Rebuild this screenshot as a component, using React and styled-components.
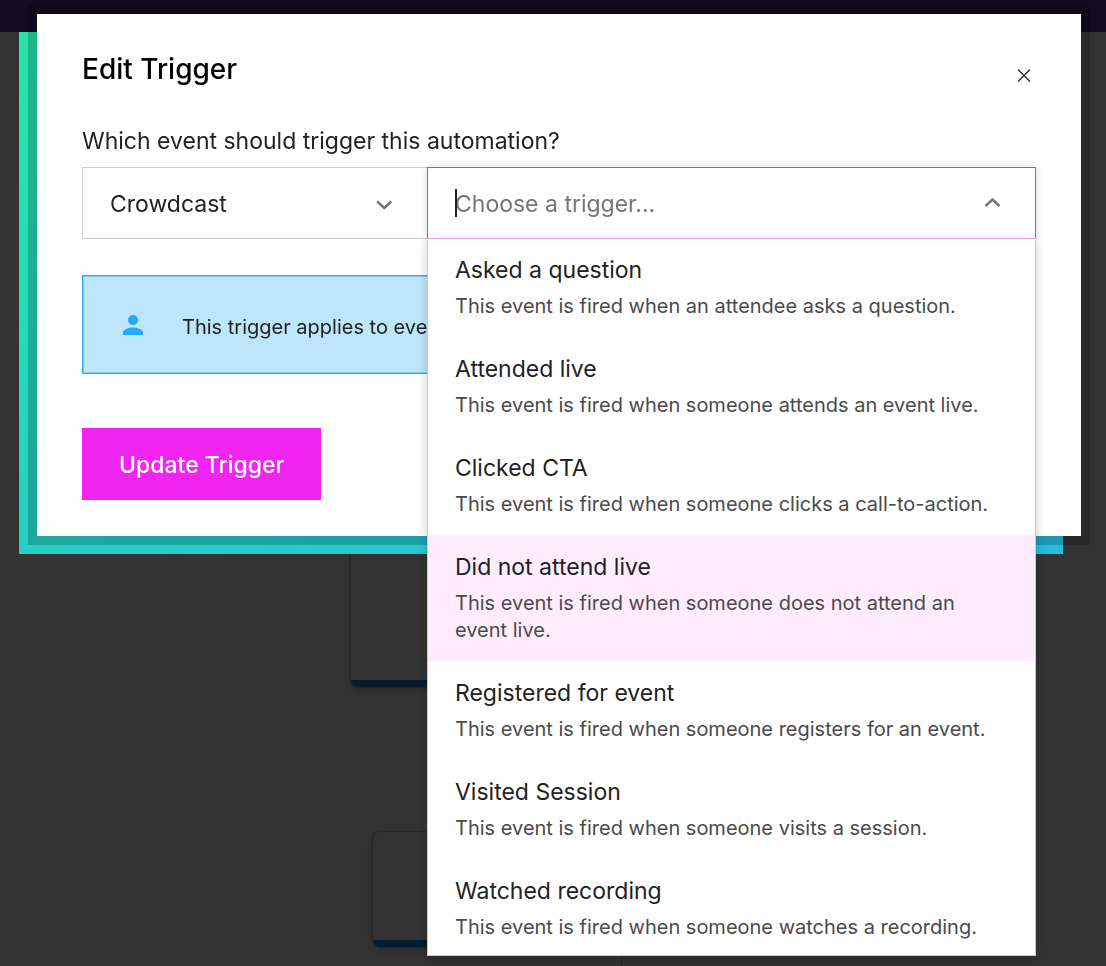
import React from 'react'
import styled, { createGlobalStyle } from 'styled-components'
import { MdPerson } from 'react-icons/md'

const triggers = [
  {
    id: 'asked',
    title: 'Asked a question',
    text: 'This event is fired when an attendee asks a question.',
  },
  {
    id: 'attended',
    title: 'Attended live',
    text: 'This event is fired when someone attends an event live.',
  },
  {
    id: 'clicked',
    title: 'Clicked CTA',
    text: 'This event is fired when someone clicks a call-to-action.',
  },
  {
    id: 'missed',
    title: 'Did not attend live',
    text: 'This event is fired when someone does not attend an event live.',
  },
  {
    id: 'registered',
    title: 'Registered for event',
    text: 'This event is fired when someone registers for an event.',
  },
  {
    id: 'visited',
    title: 'Visited Session',
    text: 'This event is fired when someone visits a session.',
  },
  {
    id: 'watched',
    title: 'Watched recording',
    text: 'This event is fired when someone watches a recording.',
  },
]

const Chevron = ({ up }) => (
  <ChevronIcon viewBox='0 0 18 16' aria-hidden='true'>
    <path d={up ? 'M2.5 11 9.5 4.5l7 6.5' : 'M2.2 6.5 9.2 13l7-6.5'} />
  </ChevronIcon>
)

const App = () => {
  const [active, setActive] = React.useState('missed')
  const [query, setQuery] = React.useState('')

  return (
    <>
      <GlobalStyle />
      <Page>
        <TopBar />
        <Canvas>
          <Step $width={540} $height={504} />
          <Connector $height={145} />
          <Step $width={496} $height={115} />
          <Connector $height={20} />
        </Canvas>
      </Page>
      <Overlay>
        <Modal role='dialog' aria-labelledby='modal-title'>
          <Header>
            <Title id='modal-title'>Edit Trigger</Title>
            <CloseButton type='button' aria-label='Close'>
              <svg width='14' height='14' viewBox='0 0 14 14'>
                <path d='M1 1.5l12 12M13 1.5L1 13.5' />
              </svg>
            </CloseButton>
          </Header>
          <Label htmlFor='trigger'>
            Which event should trigger this automation?
          </Label>
          <Fields>
            <Field>
              <Select aria-label='Integration' defaultValue='crowdcast'>
                <option value='crowdcast'>Crowdcast</option>
              </Select>
              <Chevron />
            </Field>
            <Field $focused>
              <Input
                id='trigger'
                type='text'
                role='combobox'
                aria-expanded='true'
                aria-controls='trigger-menu'
                autoComplete='off'
                placeholder='Choose a trigger...'
                value={query}
                onChange={(e) => setQuery(e.target.value)}
              />
              {!query && <Caret />}
              <Chevron up />
              <Menu id='trigger-menu' role='listbox'>
                {triggers.map((trigger) => (
                  <Option
                    key={trigger.id}
                    role='option'
                    aria-selected={trigger.id === active}
                    $active={trigger.id === active}
                    onMouseEnter={() => setActive(trigger.id)}
                  >
                    <OptionTitle>{trigger.title}</OptionTitle>
                    <OptionText>{trigger.text}</OptionText>
                  </Option>
                ))}
              </Menu>
            </Field>
          </Fields>
          <Notice>
            <MdPerson size={30} />
            <p>This trigger applies to everyone.</p>
          </Notice>
          <SubmitButton type='submit'>Update Trigger</SubmitButton>
        </Modal>
      </Overlay>
    </>
  )
}

export default App

// Styles
const GlobalStyle = createGlobalStyle`
  * {
    box-sizing: border-box;
  }

  body {
    margin: 0;
    overflow: hidden;
    background: #fff;
    color: #222;
    font-family: Inter, 'Liberation Sans', sans-serif;
    font-size: 23px;
    line-height: 27px;
  }

  h2, p, ul {
    margin: 0;
    padding: 0;
  }

  button, input, select {
    font: inherit;
    color: inherit;
  }
`

const Page = styled.div`
  height: 100vh;
  overflow: hidden;
`

const TopBar = styled.div`
  height: 32px;
  background: #553caa;
`

const Canvas = styled.div`
  display: flex;
  flex-direction: column;
  align-items: center;
  padding: 151px 0 0 136px;
`

const Step = styled.div`
  flex: none;
  width: ${(props) => props.$width}px;
  height: ${(props) => props.$height}px;
  border-bottom: 7px solid #1e8cdc;
  border-radius: 7px;
  box-shadow: 0 0 1px 1px rgba(0, 0, 0, 0.2), 0 3px 8px rgba(0, 0, 0, 0.25);
`

const Connector = styled.div`
  flex: none;
  width: 1px;
  height: ${(props) => props.$height}px;
  background: #bbb;
`

const Overlay = styled.div`
  position: fixed;
  inset: 0;
  padding: 14px 25px 0 37px;
  background: rgba(0, 0, 0, 0.8);
`

const Modal = styled.div`
  position: relative;
  display: flex;
  flex-direction: column;
  align-items: stretch;
  padding: 37px 45px 36px;
  background: #fff;
  box-shadow: 0 0 0 9px rgba(0, 0, 0, 0.2);

  /* gradient slab that peeks out behind the dialog */
  &::before {
    content: '';
    position: absolute;
    z-index: -1;
    inset: 18px 18px -18px -18px;
    background: linear-gradient(
      to bottom right,
      #25e6a8,
      #25d0c6 50%,
      #25bde1
    );
  }
`

const Header = styled.header`
  display: flex;
  justify-content: space-between;
  align-items: flex-start;
  height: 48px;
  margin-bottom: 28px;
`

const Title = styled.h2`
  font-size: 28px;
  line-height: 36px;
  font-weight: 500;
  color: #000;
`

const CloseButton = styled.button`
  display: grid;
  place-items: center;
  width: 24px;
  height: 48px;
  padding: 0;
  border: 0;
  background: none;
  cursor: pointer;

  path {
    fill: none;
    stroke: #333;
    stroke-width: 1.5;
  }
`

const Label = styled.label`
  line-height: 28px;
  margin-bottom: 12px;
`

const Fields = styled.div`
  display: grid;
  grid-template-columns: 345fr 609fr;
  margin-bottom: 36px;
`

const Field = styled.div`
  position: relative;
  display: flex;
  align-items: center;
  height: 72px;
  padding-right: 34px;
  border: 1px solid ${(props) => (props.$focused ? '#e32fe3' : '#ccc')};
  border-right-width: ${(props) => (props.$focused ? '1px' : '0')};
  box-shadow: ${(props) =>
    props.$focused ? '0 0 9px rgba(0, 0, 0, 0.15)' : 'none'};
  background: #fff;
`

const ChevronIcon = styled.svg`
  flex: none;
  width: 18px;
  height: 16px;
  fill: none;
  stroke: #777;
  stroke-width: 2.6;
  pointer-events: none;
`

const Select = styled.select`
  flex: 1;
  min-width: 0;
  height: 100%;
  padding: 2px 27px 0;
  border: 0;
  outline: 0;
  appearance: none;
  background: none;
`

const Input = styled.input`
  flex: 1;
  min-width: 0;
  height: 100%;
  padding: 2px 27px 0;
  border: 0;
  outline: 0;
  background: none;

  &::placeholder {
    color: #757575;
    opacity: 1;
  }
`

const Caret = styled.span`
  position: absolute;
  left: 27px;
  top: 21px;
  width: 2px;
  height: 28px;
  background: #222;
`

const Menu = styled.ul`
  position: absolute;
  z-index: 1;
  top: 70px;
  left: -1px;
  right: -1px;
  max-height: 718px;
  overflow: hidden;
  list-style: none;
  background: #fff;
  border: 1px solid #ccc;
  border-top-color: #dda6dd;
  box-shadow: 0 4px 10px rgba(0, 0, 0, 0.2);
`

const Option = styled.li`
  padding: 19px 27px 17px;
  background: ${(props) => (props.$active ? '#ffedff' : '#fff')};
  cursor: pointer;

  &:first-child {
    padding-top: 18px;
  }
`

const OptionTitle = styled.p`
  margin-bottom: 9px;
`

const OptionText = styled.p`
  font-size: 20px;
  color: #4a4a4a;
`

const Notice = styled.div`
  display: flex;
  align-items: center;
  gap: 34px;
  height: 99px;
  margin-bottom: 54px;
  padding: 0 35px;
  border: 1px solid #29aef5;
  box-shadow: inset 0 0 0 1px #7cccf7;
  background: #bde6fa;
  font-size: 20px;

  svg {
    color: #23aaf5;
  }

  p {
    padding-top: 5px;
  }
`

const SubmitButton = styled.button`
  align-self: flex-start;
  height: 72px;
  padding: 2px 37px 0;
  border: 0;
  background: #f224f2;
  color: #fff;
  font-weight: 500;
  cursor: pointer;
`
